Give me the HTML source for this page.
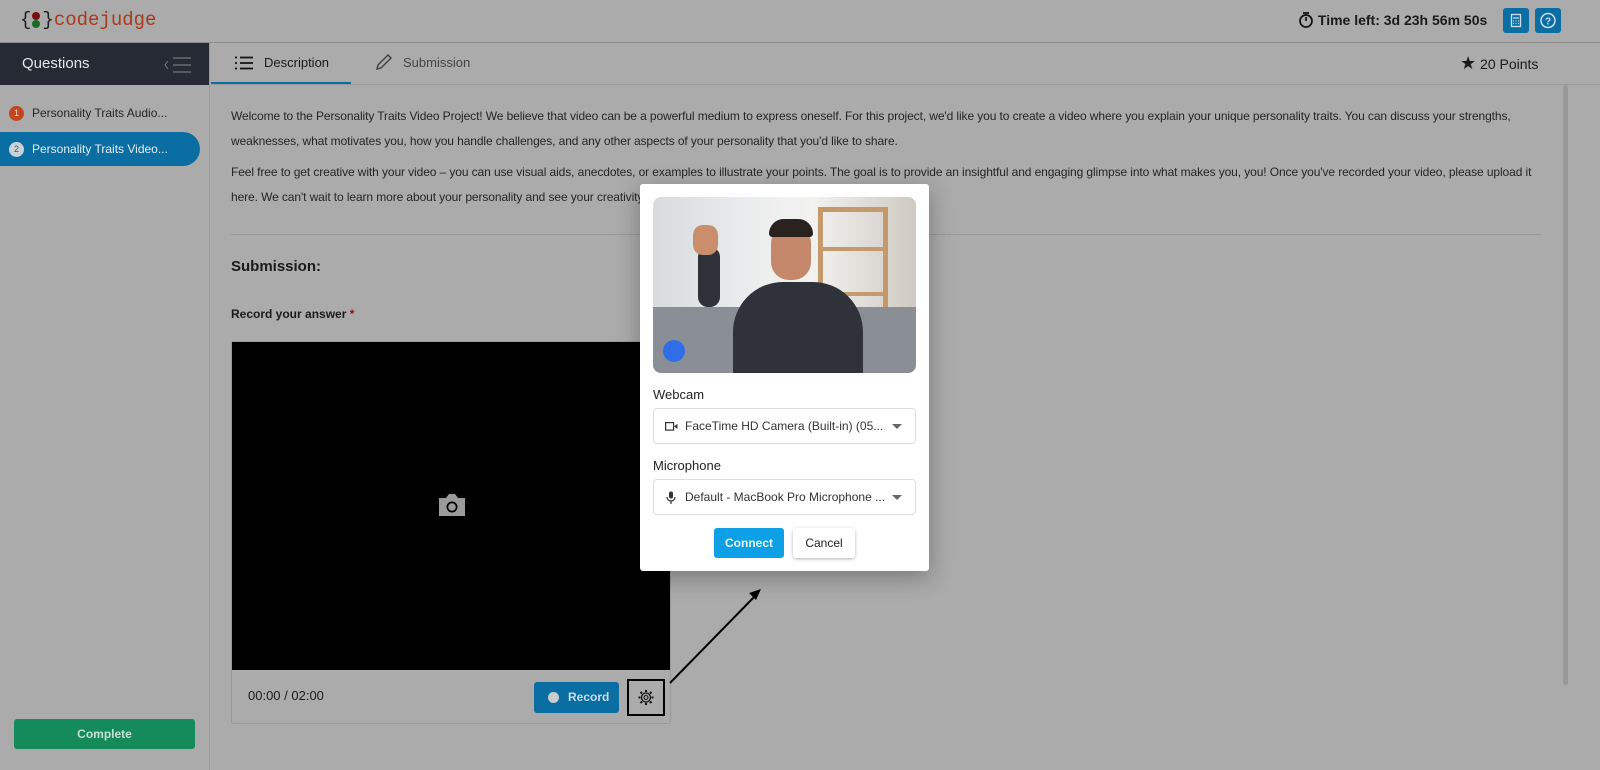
<!DOCTYPE html>
<html><head><meta charset="utf-8"><style>
*{box-sizing:border-box;margin:0;padding:0}
body{width:1600px;height:770px;overflow:hidden;background:#ababab;font-family:"Liberation Sans",sans-serif;color:#1e1e1e;position:relative}
.top{position:absolute;left:0;top:0;width:1600px;height:43px;border-bottom:1px solid #8d8d8d}
.logo{position:absolute;left:20px;top:9px;font-family:"Liberation Mono",monospace;font-size:19px;color:#a8391b}
.side{position:absolute;left:0;top:43px;width:210px;height:727px;border-right:1px solid #999}
.sh{height:42px;background:#262a35;color:#e6e6e6;font-size:15px;padding:12px 22px;position:relative}
.item{position:absolute;left:0;width:200px;height:34px;font-size:12px;color:#252525;padding:10px 0 0 32px}
.num{position:absolute;left:9px;top:10px;width:15px;height:15px;border-radius:50%;font-size:9px;color:#ddd;text-align:center;line-height:15px}
.tabs{position:absolute;left:211px;top:43px;width:1389px;height:42px;border-bottom:1px solid #999}
.content{position:absolute;left:231px;top:104px;width:1330px;font-size:12px;line-height:25px;color:#252525;letter-spacing:-0.1px}
.btn{position:absolute;border-radius:3px}
.modal{position:absolute;left:640px;top:184px;width:289px;height:387px;background:#fff;border-radius:3px;box-shadow:0 6px 24px rgba(0,0,0,.3)}
.sel{position:absolute;left:13px;width:263px;height:36px;border:1px solid #ddd;border-radius:4px;font-size:12px;padding:10px 0 0 31px;color:#333}
.sel:after{content:"";position:absolute;right:13px;top:15px;border:5px solid transparent;border-top-color:#666}
.lbl{position:absolute;left:13px;font-size:13px;color:#222}
</style></head><body>
<div class="top">
<div class="logo"><span style="color:#222">{</span><span style="display:inline-block;width:11px;position:relative;top:0"><span style="position:absolute;left:1px;top:-13px;width:8px;height:8px;border-radius:50%;background:#7a0f0f"></span><span style="position:absolute;left:1px;top:-5px;width:8px;height:8px;border-radius:50%;background:#1c6b25"></span></span><span style="color:#222">}</span>codejudge</div>
<div style="position:absolute;left:1298px;top:11px;font-size:14px;font-weight:bold;color:#1a1a1a">
<svg width="16" height="17" viewBox="0 0 16 17" style="vertical-align:-3px"><circle cx="8" cy="10" r="6" fill="none" stroke="#111" stroke-width="1.7"/><path d="M5 2h6M8 6v4" stroke="#111" stroke-width="1.7"/></svg> Time left: 3d 23h 56m 50s</div>
<div class="btn" style="left:1503px;top:8px;width:26px;height:25px;background:#0b6ea3"><svg width="26" height="25"><rect x="8.5" y="6.5" width="9" height="12" fill="none" stroke="#cde" stroke-width="1.3"/><path d="M10 10h6M10 13h1M12.5 13h1M15 13h1M10 15.5h1M12.5 15.5h1M15 15.5h1" stroke="#cde" stroke-width="1.3"/></svg></div>
<div class="btn" style="left:1535px;top:8px;width:26px;height:25px;background:#0b6ea3"><svg width="26" height="25"><circle cx="13" cy="12.5" r="7" fill="none" stroke="#cde" stroke-width="1.5"/><text x="13" y="16.5" font-size="10" font-weight="bold" fill="#cde" text-anchor="middle" font-family="Liberation Sans">?</text></svg></div>
</div>
<div class="side">
<div class="sh">Questions<svg style="position:absolute;left:164px;top:13px" width="28" height="18"><path d="M4 5l-3 4 3 4" fill="none" stroke="#777" stroke-width="1"/><path d="M9 2h18M9 9h18M9 16h18" stroke="#777" stroke-width="1.2"/></svg></div>
<div class="item" style="top:53px"><span class="num" style="background:#c4461f">1</span>Personality Traits Audio...</div>
<div class="item" style="top:89px;background:#0b6ea3;border-radius:0 17px 17px 0;color:#e4eef5"><span class="num" style="background:#c9d3da;color:#555">2</span>Personality Traits Video...</div>
<div class="btn" style="left:14px;top:676px;width:181px;height:30px;background:#158a5a;color:#c4e0d2;font-size:12px;font-weight:bold;text-align:center;line-height:30px">Complete</div>
</div>
<div class="tabs">
<div style="position:absolute;left:0;top:0;width:140px;height:41px;border-bottom:2px solid #0b6ea3"></div>
<svg style="position:absolute;left:24px;top:13px" width="18" height="14"><path d="M0 1.5h2M0 7h2M0 12.5h2M5 1.5h13M5 7h13M5 12.5h13" stroke="#111" stroke-width="1.8"/></svg>
<div style="position:absolute;left:53px;top:12px;font-size:13px;color:#1a1a1a">Description</div>
<svg style="position:absolute;left:164px;top:10px" width="18" height="18"><path d="M2 16l1-4L13 2l3 3L6 15z" fill="none" stroke="#444" stroke-width="1.5"/></svg>
<div style="position:absolute;left:192px;top:12px;font-size:13px;color:#444">Submission</div>
<div style="position:absolute;left:1249px;top:10px;font-size:14px;color:#1a1a1a"><span style="font-size:18px">★</span> 20 Points</div>
</div>
<div style="position:absolute;left:1563px;top:85px;width:5px;height:600px;background:#999;border-radius:3px"></div>
<div class="content">
<p>Welcome to the Personality Traits Video Project! We believe that video can be a powerful medium to express oneself. For this project, we'd like you to create a video where you explain your unique personality traits. You can discuss your strengths, weaknesses, what motivates you, how you handle challenges, and any other aspects of your personality that you'd like to share.</p>
<p style="margin-top:6px">Feel free to get creative with your video – you can use visual aids, anecdotes, or examples to illustrate your points. The goal is to provide an insightful and engaging glimpse into what makes you, you! Once you've recorded your video, please upload it here. We can't wait to learn more about your personality and see your creativity!</p>
</div>
<div style="position:absolute;left:231px;top:234px;width:1310px;height:1px;background:#999"></div>
<div style="position:absolute;left:231px;top:258px;font-size:15px;font-weight:bold;color:#1a1a1a">Submission:</div>
<div style="position:absolute;left:231px;top:307px;font-size:12px;font-weight:bold;color:#1a1a1a">Record your answer <span style="color:#8a1010">*</span></div>
<div style="position:absolute;left:231px;top:341px;width:440px;height:383px;border:1px solid #999;border-radius:3px">
<div style="position:absolute;left:0;top:0;width:438px;height:328px;background:#000"></div>
<svg style="position:absolute;left:205px;top:150px" width="30" height="26"><path d="M2 6h7l3-4h6l3 4h7v18H2z" fill="#9a9a9a"/><circle cx="15" cy="15" r="5.5" fill="#000"/><circle cx="15" cy="15" r="3.8" fill="#9a9a9a"/></svg>
<div style="position:absolute;left:16px;top:346px;font-size:13px;color:#1a1a1a">00:00 / 02:00</div>
<div class="btn" style="left:302px;top:340px;width:85px;height:31px;background:#0b6ea3;color:#c8dcea;font-size:12px;font-weight:bold;line-height:31px;padding-left:34px"><span style="position:absolute;left:14px;top:10px;width:11px;height:11px;border-radius:50%;background:#ccc"></span>Record</div>
<div style="position:absolute;left:395px;top:337px;width:38px;height:37px;border:2px solid #000"><svg width="34" height="33" viewBox="0 0 34 33"><circle cx="17" cy="16.5" r="4.5" fill="none" stroke="#111" stroke-width="1.3"/><circle cx="17" cy="16.5" r="2" fill="none" stroke="#111" stroke-width="1.1"/><path d="M17 11v-2M17 22v2M11.5 16.5h-2M22.5 16.5h2M13 12.5l-1.5-1.5M21 20.5l1.5 1.5M13 20.5l-1.5 1.5M21 12.5l1.5-1.5" stroke="#111" stroke-width="2"/></svg></div>
</div>
<svg style="position:absolute;left:660px;top:580px" width="110" height="110"><path d="M10 103L98 13" stroke="#000" stroke-width="2"/><path d="M101 9l-12 4 7 7z" fill="#000"/></svg>
<div class="modal">
<div style="position:absolute;left:13px;top:13px;width:263px;height:176px;border-radius:8px;overflow:hidden;background:linear-gradient(90deg,#d8dcdf 0%,#eceeee 40%,#f2f2f0 60%,#cfcac3 100%)">
<div style="position:absolute;left:165px;top:10px;width:70px;height:160px;border:5px solid #c49a6c;border-bottom:none"></div>
<div style="position:absolute;left:170px;top:50px;width:60px;height:4px;background:#c49a6c"></div>
<div style="position:absolute;left:170px;top:95px;width:60px;height:4px;background:#c49a6c"></div>
<div style="position:absolute;left:0;top:110px;width:263px;height:70px;background:#8a8f96"></div>
<div style="position:absolute;left:80px;top:85px;width:130px;height:100px;border-radius:50px 50px 0 0;background:#2f3238"></div>
<div style="position:absolute;left:45px;top:50px;width:22px;height:60px;border-radius:10px;background:#2f3238"></div>
<div style="position:absolute;left:40px;top:28px;width:25px;height:30px;border-radius:10px;background:#c98e6c"></div>
<div style="position:absolute;left:118px;top:28px;width:40px;height:55px;border-radius:18px;background:#c6886a"></div>
<div style="position:absolute;left:116px;top:22px;width:44px;height:18px;border-radius:18px 18px 4px 4px;background:#2a221e"></div>
<div style="position:absolute;left:10px;top:143px;width:22px;height:22px;border-radius:50%;background:#2f6ee8"></div>
</div>
<div class="lbl" style="top:203px">Webcam</div>
<div class="sel" style="top:224px"><svg style="position:absolute;left:11px;top:13px" width="13" height="9"><rect x="0.6" y="0.6" width="8" height="7.5" fill="none" stroke="#333" stroke-width="1.2"/><path d="M9 4.4l3.5-2.5v5z" fill="#333"/></svg>FaceTime HD Camera (Built-in) (05...</div>
<div class="lbl" style="top:274px">Microphone</div>
<div class="sel" style="top:295px"><svg style="position:absolute;left:12px;top:11px" width="10" height="14"><rect x="3" y="0.5" width="4" height="7" rx="2" fill="#333"/><path d="M1 6a4 4 0 008 0M5 10v3" fill="none" stroke="#333" stroke-width="1.2"/></svg>Default - MacBook Pro Microphone ...</div>
<div class="btn" style="left:74px;top:344px;width:70px;height:30px;background:#0ea0e6;color:#e6f4fc;font-size:12px;font-weight:bold;text-align:center;line-height:30px">Connect</div>
<div class="btn" style="left:153px;top:344px;width:62px;height:30px;background:#fff;color:#222;font-size:12px;text-align:center;line-height:30px;box-shadow:0 1px 3px rgba(0,0,0,.3)">Cancel</div>
</div>
</body></html>
